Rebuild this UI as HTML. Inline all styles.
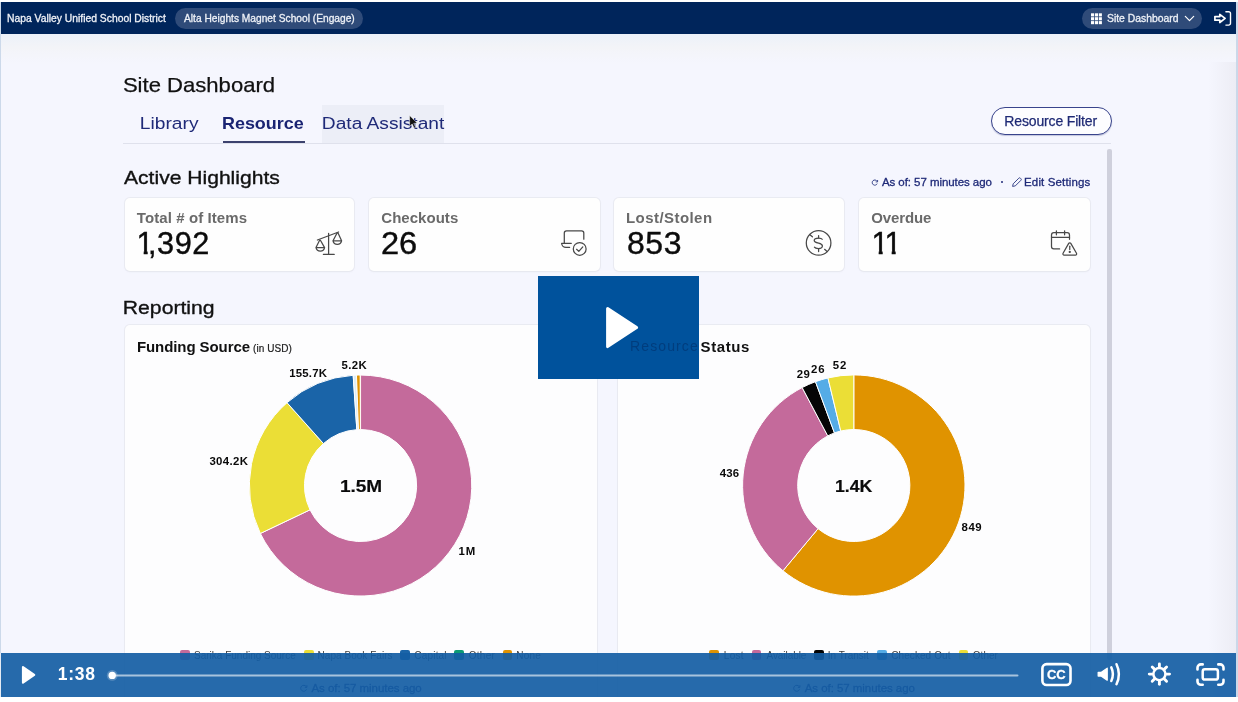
<!DOCTYPE html>
<html lang="en">
<head>
<meta charset="utf-8">
<title>Site Dashboard</title>
<style>
html,body{margin:0;padding:0;background:#fff;}
body{width:1238px;height:702px;position:relative;overflow:hidden;font-family:"Liberation Sans",sans-serif;}
.abs{position:absolute;}
.t{position:absolute;white-space:nowrap;line-height:1;}
#page{position:absolute;left:0;top:0;width:1238px;height:702px;background:#f5f6fe;overflow:hidden;will-change:transform;}
#video{position:absolute;left:-20px;top:-20px;width:1278px;height:742px;background:#f5f6fe;filter:blur(.45px);}
#vin{position:absolute;left:20px;top:20px;width:1238px;height:702px;}
#player{position:absolute;left:0;top:0;width:1238px;height:702px;}
#nav{position:absolute;left:-20px;top:-20px;width:1278px;height:54px;background:#00255b;}
.pill{position:absolute;background:#2f4b79;border-radius:11px;}
.card{position:absolute;background:#fefefe;border-radius:5px;box-shadow:0 0 0 1px rgba(229,231,238,.75),0 1px 2px rgba(150,155,180,.12);}
.num,.ttl{position:absolute;left:0;top:0;width:0;height:0;}
svg{position:absolute;left:0;top:0;overflow:visible;}
.ic{fill:none;stroke:#484848;stroke-width:1.25;stroke-linecap:round;stroke-linejoin:round;}
</style>
</head>
<body>
<div id="page">
<div id="video"><div id="vin">
<div class="abs" style="left:-20px;top:34px;width:1278px;height:30px;background:linear-gradient(#ecf1f9 0%,#f3f4f8 45%,#f5f6fe 100%)"></div>
<div class="abs" style="left:1208px;top:62px;width:50px;height:660px;background:linear-gradient(90deg,#f5f6fe,#ececf4 60%)"></div>
<div id="nav"></div>
<div class="pill" style="left:175px;top:8px;width:188px;height:21px"></div>
<div class="pill" style="left:1082.2px;top:8px;width:120.3px;height:21px"></div>
<span class="t" style="left:6.68px;top:14px;font-size:10.4px;color:#eef1f7;transform:scaleX(0.9942);transform-origin:0.62px 0;-webkit-text-stroke:0.3px #eef1f7;">Napa Valley Unified School District</span>
<span class="t" style="left:183.72px;top:14px;font-size:10.4px;color:#eef1f7;transform:scaleX(0.9820);transform-origin:0.08px 0;-webkit-text-stroke:0.3px #eef1f7;">Alta Heights Magnet School (Engage)</span>
<span class="t" style="left:1107.46px;top:14px;font-size:10.4px;color:#eef1f7;transform:scaleX(0.9989);transform-origin:0.64px 0;-webkit-text-stroke:0.3px #eef1f7;">Site Dashboard</span>
<svg width="1238" height="40"><rect x="1091.0" y="13.3" width="3.1" height="3.1" fill="#fff"/><rect x="1094.9" y="13.3" width="3.1" height="3.1" fill="#fff"/><rect x="1098.8" y="13.3" width="3.1" height="3.1" fill="#fff"/><rect x="1091.0" y="17.2" width="3.1" height="3.1" fill="#fff"/><rect x="1094.9" y="17.2" width="3.1" height="3.1" fill="#fff"/><rect x="1098.8" y="17.2" width="3.1" height="3.1" fill="#fff"/><rect x="1091.0" y="21.1" width="3.1" height="3.1" fill="#fff"/><rect x="1094.9" y="21.1" width="3.1" height="3.1" fill="#fff"/><rect x="1098.8" y="21.1" width="3.1" height="3.1" fill="#fff"/><path d="M1185.3 16.4l4.2 4.2l4.2-4.2" fill="none" stroke="#fff" stroke-width="1.2" stroke-linecap="round" stroke-linejoin="round"/><path d="M1214.9 16.6H1219.8V14.3L1225.1 18.4L1219.8 22.5V20.2H1214.9Z" fill="none" stroke="#fff" stroke-width="1.7" stroke-linejoin="round"/><path d="M1225.9 11.7h2.8a1.8 1.8 0 0 1 1.8 1.8v9.8a1.8 1.8 0 0 1-1.8 1.8h-2.8" fill="none" stroke="#fff" stroke-width="1.4" stroke-linecap="round"/></svg>
<span class="t" style="left:123.45px;top:75px;font-size:20.3px;color:#111111;transform:scaleX(1.0885);transform-origin:1.25px 0;-webkit-text-stroke:0.25px #111111;">Site Dashboard</span>
<div class="abs" style="left:321.5px;top:104.5px;width:122px;height:38.5px;background:#eceef7"></div>
<span class="t" style="left:139.66px;top:115px;font-size:17.4px;color:#1f2a78;transform:scaleX(1.1030);transform-origin:1.44px 0;">Library</span>
<span class="t" style="left:222.34px;top:115px;font-size:17px;color:#1a2473;transform:scaleX(1.0556);transform-origin:1.16px 0;font-weight:700;">Resource</span>
<span class="t" style="left:321.56px;top:115px;font-size:17.3px;color:#1f2a78;transform:scaleX(1.1083);transform-origin:1.44px 0;">Data Assistant</span>
<div class="abs" style="left:123px;top:143px;width:988px;height:1px;background:#dfe1ec"></div>
<div class="abs" style="left:222.8px;top:141.1px;width:82px;height:1.7px;background:#3c426e"></div>
<svg width="1238" height="200"><path d="M409.6 115.4v11l2.600-2.300l1.900 4.000l1.600-.8l-1.900-3.900l3.400-.3z" fill="#111" stroke="#fff" stroke-width=".5"/></svg>
<div class="abs" style="left:991px;top:107px;width:119px;height:26px;border:1px solid #39448c;border-radius:14px;background:#fdfdff;box-shadow:0 1px 1px rgba(40,50,120,.25)"></div>
<span class="t" style="left:1004.30px;top:114px;font-size:14px;color:#1f2a75;letter-spacing:-0.15px;-webkit-text-stroke:0.25px #1f2a75;">Resource Filter</span>
<div class="abs" style="left:1107px;top:149px;width:4.5px;height:511px;background:#cfd0dc;border-radius:2px"></div>
<span class="t" style="left:123.61px;top:169px;font-size:18.6px;color:#111111;transform:scaleX(1.1339);transform-origin:0.09px 0;-webkit-text-stroke:0.35px #111111;">Active Highlights</span>
<span class="t" style="left:881.91px;top:177px;font-size:11.5px;color:#1f2a78;letter-spacing:-0.06px;-webkit-text-stroke:0.3px #1f2a78;">As of: 57 minutes ago</span>
<span class="t" style="left:1024.06px;top:177px;font-size:11.5px;color:#1f2a78;letter-spacing:0.14px;-webkit-text-stroke:0.3px #1f2a78;">Edit Settings</span>
<div class="abs" style="left:1000.7px;top:181.3px;width:2px;height:2px;border-radius:1px;background:#1f2a78"></div>
<svg width="1238" height="200"><path d="M877 181.2a2.6 2.6 0 1 0 .2 2.4" fill="none" stroke="#27347f" stroke-width=".9"/><path d="M877.6 180v1.9h-1.9" fill="none" stroke="#27347f" stroke-width=".9"/><path d="M1012.6 186.4l.6-2.6l5.600-5.600a1.1 1.1 0 0 1 1.6 0l.5.5a1.1 1.1 0 0 1 0 1.6l-5.600 5.600z" fill="none" stroke="#27347f" stroke-width=".9" stroke-linejoin="round"/></svg>
<span class="t" style="left:122.89px;top:299px;font-size:18.6px;color:#111111;transform:scaleX(1.1381);transform-origin:1.31px 0;-webkit-text-stroke:0.35px #111111;">Reporting</span>
<div class="card" style="left:124.5px;top:198.4px;width:229.7px;height:72.6px"></div>
<div class="card" style="left:368.8px;top:198.4px;width:230.8px;height:72.6px"></div>
<div class="card" style="left:614.1px;top:198.4px;width:230.1px;height:72.6px"></div>
<div class="card" style="left:859px;top:198.4px;width:230.5px;height:72.6px"></div>
<span class="t" style="left:136.81px;top:210px;font-size:15px;color:#6a6a6a;font-weight:700;letter-spacing:0.09px;">Total # of Items</span>
<span class="t" style="left:381.31px;top:210px;font-size:15px;color:#6a6a6a;font-weight:700;letter-spacing:0.03px;">Checkouts</span>
<span class="t" style="left:626.00px;top:210px;font-size:15px;color:#6a6a6a;font-weight:700;letter-spacing:0.44px;">Lost/Stolen</span>
<span class="t" style="left:871.21px;top:210px;font-size:15px;color:#6a6a6a;font-weight:700;letter-spacing:-0.11px;">Overdue</span>
<div class="num"><span class="t" style="left:136.58px;top:228px;font-size:30.5px;color:#0c0c0c;-webkit-text-stroke:0.4px #0c0c0c;clip-path:polygon(0 0,100% 0,100% 21.86px,11.08px 21.86px,11.08px 30.50px,7.12px 30.50px,7.12px 21.86px,0 21.86px)">1</span><span class="t" style="left:148.08px;top:228px;font-size:30.5px;color:#0c0c0c;-webkit-text-stroke:0.4px #0c0c0c;">,</span><span class="t" style="left:156.75px;top:228px;font-size:30.5px;color:#0c0c0c;transform:scaleX(1.0064);transform-origin:1.15px 0;letter-spacing:0.60px;-webkit-text-stroke:0.4px #0c0c0c;">392</span></div>
<span class="t" style="left:381.21px;top:228px;font-size:30.5px;color:#0c0c0c;transform:scaleX(1.0686);transform-origin:1.29px 0;-webkit-text-stroke:0.4px #0c0c0c;">26</span>
<span class="t" style="left:626.56px;top:228px;font-size:30.5px;color:#0c0c0c;transform:scaleX(1.0475);transform-origin:1.24px 0;letter-spacing:0.60px;-webkit-text-stroke:0.4px #0c0c0c;">853</span>
<div class="num"><span class="t" style="left:871.58px;top:228px;font-size:30.5px;color:#0c0c0c;-webkit-text-stroke:0.4px #0c0c0c;clip-path:polygon(0 0,100% 0,100% 21.86px,11.08px 21.86px,11.08px 30.50px,7.12px 30.50px,7.12px 21.86px,0 21.86px)">1</span><span class="t" style="left:884.58px;top:228px;font-size:30.5px;color:#0c0c0c;-webkit-text-stroke:0.4px #0c0c0c;clip-path:polygon(0 0,100% 0,100% 21.86px,11.08px 21.86px,11.08px 30.50px,7.12px 30.50px,7.12px 21.86px,0 21.86px)">1</span></div>
<svg width="1238" height="300"><g class="ic"><path d="M328.6 233.3V254.3M323.4 254.4H334.2M317.4 240L338.6 232"/><path d="M319.6 240.2L316 247.6a4.4 4.4 0 0 0 8.6 0L320.4 240.2M316 247.6H324.6"/><path d="M337.2 232.8L333 240.8a4.4 4.4 0 0 0 8.6 0L337.9 232.8M333 240.8H341.6"/></g><g class="ic"><path d="M564.3 243.2V233a2.2 2.2 0 0 1 2.2-2.2H581.6a2.2 2.2 0 0 1 2.2 2.2V239.2"/><path d="M571.3 243.3H561.6a4.4 4.4 0 0 0 4.4 4.1H569.6"/><circle cx="579.7" cy="248.9" r="6.4"/><path d="M576.6 249.3L578.8 251.4L582.8 246.9"/></g><g class="ic"><circle cx="818.6" cy="242.9" r="12.3"/><path d="M822.2 239.3c-.6-1.1-1.9-1.3-3.6-1.3c-2.6 0-4.400 1-4.400 2.500c0 1.500 1.500 2.000 4.400 2.700c2.900 .7 3.800 1.500 3.800 2.900c0 1.600-1.700 2.500-4.000 2.500c-1.800 0-3.300-.3-4.000-1.400"/><path d="M818.6 235.6V238M818.6 248.7V251.5M809.9 234.7L812.4 236.8M824.6 249.3L827.1 251.5"/></g><g class="ic"><path d="M1059.6 248.9H1053.8a2.3 2.3 0 0 1-2.300-2.300V234.9a2.300 2.300 0 0 1 2.300-2.300H1067.2a2.300 2.300 0 0 1 2.300 2.300V239.3"/><path d="M1051.5 237.3H1069.5M1056.4 230.8V234.8M1064.600 230.8V234.8"/><path d="M1068.700 243.400a1.200 1.200 0 0 1 2.100 0L1076.500 253.300a1.200 1.200 0 0 1-1.050 1.800H1064.1a1.200 1.200 0 0 1-1.050-1.800Z"/><path d="M1069.750 246.200V249.400"/><circle cx="1069.750" cy="251.900" r=".5" fill="#484848"/></g></svg>
<div class="card" style="left:124.5px;top:324.5px;width:472.3px;height:420px;background:#fdfdfe"></div>
<div class="card" style="left:617.5px;top:324.5px;width:472px;height:420px;background:#fdfdfe"></div>
<span class="t" style="left:136.90px;top:339px;font-size:15px;color:#111111;font-weight:700;letter-spacing:-0.08px;">Funding Source</span>
<span class="t" style="left:253.04px;top:344px;font-size:10px;color:#222;letter-spacing:0.06px;-webkit-text-stroke:0.2px #222;">(in USD)</span>
<svg width="1238" height="702"><path d="M360.55 375.05A111.2 110.5 0 1 1 260.35 533.47L310.00 509.83A56.1 56.0 0 1 0 360.55 429.55Z" fill="#c46a9b" stroke="#fff" stroke-width="1" stroke-linejoin="round"/>
<path d="M260.35 533.47A111.2 110.5 0 0 1 287.01 402.66L323.45 443.54A56.1 56.0 0 0 0 310.00 509.83Z" fill="#ebde36" stroke="#fff" stroke-width="1" stroke-linejoin="round"/>
<path d="M287.01 402.66A111.2 110.5 0 0 1 353.18 375.29L356.83 429.67A56.1 56.0 0 0 0 323.45 443.54Z" fill="#1a64a8" stroke="#fff" stroke-width="1" stroke-linejoin="round"/>
<path d="M353.18 375.29A111.2 110.5 0 0 1 356.48 375.12L358.49 429.59A56.1 56.0 0 0 0 356.83 429.67Z" fill="#dcedf8" stroke="#fff" stroke-width="1" stroke-linejoin="round"/>
<path d="M356.48 375.12A111.2 110.5 0 0 1 360.16 375.05L360.35 429.55A56.1 56.0 0 0 0 358.49 429.59Z" fill="#e09300" stroke="#fff" stroke-width="1" stroke-linejoin="round"/><path d="M853.80 374.90A111.2 110.6 0 1 1 782.96 570.76L818.06 528.67A56.1 56.0 0 1 0 853.80 429.50Z" fill="#e09300" stroke="#fff" stroke-width="1" stroke-linejoin="round"/>
<path d="M782.96 570.76A111.2 110.6 0 0 1 802.16 387.55L827.75 435.90A56.1 56.0 0 0 0 818.06 528.67Z" fill="#c46a9b" stroke="#fff" stroke-width="1" stroke-linejoin="round"/>
<path d="M802.16 387.55A111.2 110.6 0 0 1 815.46 381.68L834.46 432.93A56.1 56.0 0 0 0 827.75 435.90Z" fill="#050505" stroke="#fff" stroke-width="1" stroke-linejoin="round"/>
<path d="M815.46 381.68A111.2 110.6 0 0 1 827.94 377.93L840.75 431.04A56.1 56.0 0 0 0 834.46 432.93Z" fill="#55ace6" stroke="#fff" stroke-width="1" stroke-linejoin="round"/>
<path d="M827.94 377.93A111.2 110.6 0 0 1 853.80 374.90L853.80 429.50A56.1 56.0 0 0 0 840.75 431.04Z" fill="#ebde36" stroke="#fff" stroke-width="1" stroke-linejoin="round"/></svg>
<span class="t" style="left:289.28px;top:368px;font-size:11.4px;color:#0a0a0a;font-weight:700;letter-spacing:0.19px;">155.7K</span>
<span class="t" style="left:341.54px;top:360px;font-size:11.4px;color:#0a0a0a;font-weight:700;letter-spacing:0.37px;">5.2K</span>
<span class="t" style="left:209.42px;top:456px;font-size:11.4px;color:#0a0a0a;font-weight:700;letter-spacing:0.36px;">304.2K</span>
<span class="t" style="left:458.48px;top:546px;font-size:11.4px;color:#0a0a0a;font-weight:700;letter-spacing:1.06px;">1M</span>
<span class="t" style="left:339.52px;top:478px;font-size:17.4px;color:#0a0a0a;transform:scaleX(1.0936);transform-origin:1.08px 0;font-weight:700;-webkit-text-stroke:0.2px #0a0a0a;">1.5M</span>
<span class="t" style="left:796.70px;top:369px;font-size:11.4px;color:#0a0a0a;font-weight:700;letter-spacing:0.60px;">29</span>
<span class="t" style="left:811.00px;top:364px;font-size:11.4px;color:#0a0a0a;font-weight:700;letter-spacing:0.88px;">26</span>
<span class="t" style="left:832.74px;top:360px;font-size:11.4px;color:#0a0a0a;font-weight:700;letter-spacing:1.04px;">52</span>
<span class="t" style="left:719.81px;top:468px;font-size:11.4px;color:#0a0a0a;font-weight:700;letter-spacing:0.14px;">436</span>
<span class="t" style="left:961.58px;top:522px;font-size:11.4px;color:#0a0a0a;font-weight:700;letter-spacing:0.51px;">849</span>
<span class="t" style="left:835.22px;top:478px;font-size:17.4px;color:#0a0a0a;transform:scaleX(1.0183);transform-origin:1.08px 0;font-weight:700;-webkit-text-stroke:0.2px #0a0a0a;">1.4K</span>
<div class="abs" style="left:180.4px;top:650.1px;width:9.7px;height:9.7px;border-radius:2px;background:#c46a9b"></div>
<span class="t" style="left:194.04px;top:651px;font-size:10px;color:#3a3a3a;">Sarika Funding Source</span>
<div class="abs" style="left:304.2px;top:650.1px;width:9.7px;height:9.7px;border-radius:2px;background:#ebde36"></div>
<span class="t" style="left:317.56px;top:651px;font-size:10px;color:#3a3a3a;letter-spacing:0.04px;">Napa Book Fairs</span>
<div class="abs" style="left:400.2px;top:650.1px;width:9.7px;height:9.7px;border-radius:2px;background:#1a64a8"></div>
<span class="t" style="left:414.28px;top:651px;font-size:10px;color:#3a3a3a;letter-spacing:0.20px;">Capital</span>
<div class="abs" style="left:454.4px;top:650.1px;width:9.7px;height:9.7px;border-radius:2px;background:#0c9b75"></div>
<span class="t" style="left:468.75px;top:651px;font-size:10px;color:#3a3a3a;letter-spacing:0.26px;">Other</span>
<div class="abs" style="left:502.6px;top:650.1px;width:9.7px;height:9.7px;border-radius:2px;background:#e09300"></div>
<span class="t" style="left:516.36px;top:651px;font-size:10px;color:#3a3a3a;letter-spacing:0.15px;">None</span>
<div class="abs" style="left:709.2px;top:650.1px;width:9.7px;height:9.7px;border-radius:2px;background:#e09300"></div>
<span class="t" style="left:723.79px;top:651px;font-size:10px;color:#3a3a3a;letter-spacing:0.30px;">Lost</span>
<div class="abs" style="left:751.6px;top:650.1px;width:9.7px;height:9.7px;border-radius:2px;background:#c46a9b"></div>
<span class="t" style="left:766.49px;top:651px;font-size:10px;color:#3a3a3a;letter-spacing:-0.06px;">Available</span>
<div class="abs" style="left:813.9px;top:650.1px;width:9.7px;height:9.7px;border-radius:2px;background:#050505"></div>
<span class="t" style="left:827.71px;top:651px;font-size:10px;color:#3a3a3a;">In Transit</span>
<div class="abs" style="left:877px;top:650.1px;width:9.7px;height:9.7px;border-radius:2px;background:#55ace6"></div>
<span class="t" style="left:891.18px;top:651px;font-size:10px;color:#3a3a3a;letter-spacing:0.09px;">Checked Out</span>
<div class="abs" style="left:958.6px;top:650.1px;width:9.7px;height:9.7px;border-radius:2px;background:#ebde36"></div>
<span class="t" style="left:972.85px;top:651px;font-size:10px;color:#3a3a3a;">Other</span>
<span class="t" style="left:311.51px;top:683px;font-size:11.5px;color:#27347f;letter-spacing:-0.05px;-webkit-text-stroke:0.3px #27347f;">As of: 57 minutes ago</span>
<span class="t" style="left:804.71px;top:683px;font-size:11.5px;color:#27347f;letter-spacing:-0.05px;-webkit-text-stroke:0.3px #27347f;">As of: 57 minutes ago</span>
<svg width="1238" height="702"><path d="M306.2 686.6a3 3 0 1 0 .3 2.800" fill="none" stroke="#27347f" stroke-width="1"/><path d="M306.9 685.2v2.100h-2.100" fill="none" stroke="#27347f" stroke-width="1"/><path d="M799.2 686.6a3 3 0 1 0 .3 2.800" fill="none" stroke="#27347f" stroke-width="1"/><path d="M799.9 685.2v2.100h-2.100" fill="none" stroke="#27347f" stroke-width="1"/></svg>
</div></div>
<div id="player">
<div class="abs" style="left:538px;top:276px;width:161px;height:103px;background:#00529c"></div>
<div class="ttl"><span class="t" style="left:630.12px;top:339px;font-size:14px;color:rgba(0,30,80,.4);letter-spacing:1.10px;">Resource</span> <span class="t" style="left:700.59px;top:339px;font-size:15px;color:#111111;font-weight:700;letter-spacing:0.59px;filter:blur(.45px);">Status</span></div>
<svg width="1238" height="702"><path d="M607.6 308.6L636.6 327.6L607.6 346.6Z" fill="#fff" stroke="#fff" stroke-width="3" stroke-linejoin="round"/></svg>
<div class="abs" style="left:0;top:653px;width:1238px;height:44px;background:rgba(19,93,164,.92)"></div>
<svg width="1238" height="702"><path d="M23 667.2L34.200 674.900L23 682.600Z" fill="#fff" stroke="#fff" stroke-width="2.2" stroke-linejoin="round"/><rect x="112" y="674.4" width="906.5" height="2.2" rx="1.1" fill="rgba(255,255,255,.6)"/><circle cx="112.2" cy="675.4" r="5.4" fill="rgba(255,255,255,.22)"/><circle cx="112.2" cy="675.4" r="3.7" fill="#fff"/><rect x="1042.4" y="664.1" width="28.1" height="20.900" rx="4.2" fill="none" stroke="#fff" stroke-width="2.6"/><path d="M1098.2 672.300h3.200l5.800-4.100v12.000l-5.800-4.100h-3.200z" fill="#fff" stroke="#fff" stroke-width="1.3" stroke-linejoin="round"/><path d="M1111.3 667.4Q1114.5 674.2 1111.300 681.0" fill="none" stroke="#fff" stroke-width="2.500" stroke-linecap="round"/><path d="M1116.500 664.2Q1121.300 674.2 1116.500 684.2" fill="none" stroke="#fff" stroke-width="2.500" stroke-linecap="round"/><circle cx="1159.4" cy="674.1" r="6.05" fill="none" stroke="#fff" stroke-width="2.5"/><path d="M1159.40 681.10L1159.40 684.25" stroke="#fff" stroke-width="2.9" stroke-linecap="round"/><path d="M1154.45 679.05L1152.22 681.28" stroke="#fff" stroke-width="2.9" stroke-linecap="round"/><path d="M1152.40 674.10L1149.25 674.10" stroke="#fff" stroke-width="2.9" stroke-linecap="round"/><path d="M1154.45 669.15L1152.22 666.92" stroke="#fff" stroke-width="2.9" stroke-linecap="round"/><path d="M1159.40 667.10L1159.40 663.95" stroke="#fff" stroke-width="2.9" stroke-linecap="round"/><path d="M1164.35 669.15L1166.58 666.92" stroke="#fff" stroke-width="2.9" stroke-linecap="round"/><path d="M1166.40 674.10L1169.55 674.10" stroke="#fff" stroke-width="2.9" stroke-linecap="round"/><path d="M1164.35 679.05L1166.58 681.28" stroke="#fff" stroke-width="2.9" stroke-linecap="round"/><rect x="1202.700" y="669.200" width="15.200" height="10.400" rx="2.2" fill="none" stroke="#fff" stroke-width="2.5"/><path d="M1197.500 669.400v-1.700a3.300 3.300 0 0 1 3.300-3.300h1.900M1218.300 664.400h1.900a3.300 3.300 0 0 1 3.300 3.300v1.700M1223.500 679.800v1.700a3.300 3.300 0 0 1-3.300 3.300h-1.900M1202.700 684.800h-1.900a3.300 3.300 0 0 1-3.300-3.300v-1.700" fill="none" stroke="#fff" stroke-width="2.600" stroke-linecap="round"/></svg>
<span class="t" style="left:1046.99px;top:668px;font-size:13px;color:#fff;font-weight:700;-webkit-text-stroke:0.3px #fff;">CC</span>
<span class="t" style="left:57.67px;top:666px;font-size:17.5px;color:#fff;font-weight:700;letter-spacing:0.79px;">1:38</span>
</div>
</div>
<div class="abs" style="left:0;top:0;width:1238px;height:2px;background:#fff"></div>
<div class="abs" style="left:0;top:697px;width:1238px;height:5px;background:#fff"></div>
<div class="abs" style="left:0;top:2px;width:1px;height:651px;background:#ccd9ea"></div>
<div class="abs" style="left:0;top:653px;width:1px;height:44px;background:#e4ebf4"></div>
<div class="abs" style="left:1236px;top:2px;width:2px;height:695px;background:#cbd8e9"></div>
</body>
</html>
